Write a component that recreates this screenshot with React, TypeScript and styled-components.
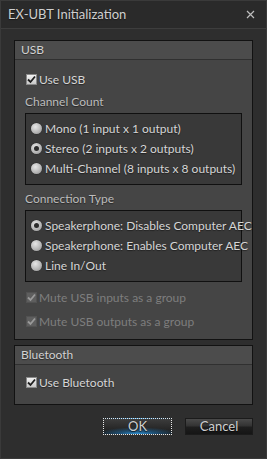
import { createGlobalStyle } from "styled-components";
import styled from "styled-components";

const GlobalStyle = createGlobalStyle`
  html, body {
    margin: 0;
    padding: 0;
    background: #2e2e2e;
  }
  * {
    box-sizing: border-box;
  }
`;

const Window = styled.div`
  width: 267px;
  height: 459px;
  background: #2e2e2e;
  border: 1px solid #3a3a3a;
  display: flex;
  flex-direction: column;
  font-family: Lato, "Open Sans", sans-serif;
  color: #d4d4d4;
  text-shadow: 0 1px 1px rgba(0, 0, 0, 0.45);
  white-space: nowrap;
`;

const TitleBar = styled.div`
  height: 28px;
  flex: none;
  display: flex;
  align-items: center;
  justify-content: space-between;
  padding: 0 10px 1px 7px;
  background: #2a2a2a;
  border-bottom: 1px solid #3d3d3d;
  font-size: 13px;
  color: #cfcfcf;
`;

const CloseButton = styled.button`
  width: 12px;
  height: 12px;
  padding: 0;
  border: none;
  background: none;
  display: flex;
  align-items: center;
  justify-content: center;
  margin-top: 1px;
`;

const Content = styled.div`
  padding: 11px 13px 0 13px;
  display: flex;
  flex-direction: column;
`;

const Group = styled.div<{ $gap?: number }>`
  border: 1px solid #121212;
  background: #454545;
  margin-top: ${({ $gap }) => $gap ?? 0}px;
`;

const GroupHeader = styled.div`
  height: 19px;
  display: flex;
  align-items: center;
  padding: 0 0 1px 6px;
  background: #4c4c4c;
  border-bottom: 1px solid #303030;
  font-size: 12px;
  color: #d2d2d2;
`;

const GroupBody = styled.div<{ $top: number; $bottom: number }>`
  padding: ${({ $top, $bottom }) => `${$top}px 10px ${$bottom}px 10px`};
  display: flex;
  flex-direction: column;
`;

const SectionLabel = styled.div<{ $gap: number }>`
  height: 20px;
  margin-top: ${({ $gap }) => $gap}px;
  display: flex;
  align-items: center;
  font-size: 12px;
  color: #bcbcbc;
`;

const OptionBox = styled.div`
  margin-top: 2px;
  border: 1px solid #101010;
  background: #393939;
  padding: 4px 0 6px 5px;
  display: flex;
  flex-direction: column;
`;

const Row = styled.label<{ $height?: number; $disabled?: boolean }>`
  height: ${({ $height }) => $height ?? 20}px;
  display: flex;
  align-items: center;
  font-size: 12px;
  color: ${({ $disabled }) => ($disabled ? "#7e7e7e" : "#d6d6d6")};
  text-shadow: ${({ $disabled }) => ($disabled ? "none" : "0 1px 1px rgba(0,0,0,0.45)")};
`;

const Radio = styled.span<{ $checked?: boolean }>`
  width: 11px;
  height: 11px;
  border-radius: 50%;
  margin-right: 3px;
  flex: none;
  background: radial-gradient(circle at 40% 35%, #e6e6e6 0%, #b8b8b8 55%, #8a8a8a 100%);
  box-shadow: 0 0 0 0.5px #2a2a2a;
  display: flex;
  align-items: center;
  justify-content: center;

  &::after {
    content: "";
    width: 5px;
    height: 5px;
    border-radius: 50%;
    background: #2c2c2c;
    display: ${({ $checked }) => ($checked ? "block" : "none")};
  }
`;

const CheckBox = styled.span<{ $disabled?: boolean }>`
  width: 11px;
  height: 11px;
  margin: 0 2px 0 1px;
  flex: none;
  background: ${({ $disabled }) => ($disabled ? "#5e5e5e" : "linear-gradient(#f2f2f2, #c9c9c9)")};
  border: 1px solid ${({ $disabled }) => ($disabled ? "#525252" : "#8a8a8a")};
  display: flex;
  align-items: center;
  justify-content: center;
`;

const ButtonRow = styled.div`
  margin-top: 13px;
  display: flex;
  justify-content: flex-end;
  gap: 13px;
`;

const DialogButton = styled.button<{ $primary?: boolean; $width: number }>`
  width: ${({ $width }) => $width}px;
  height: 17px;
  padding: 0 0 1px;
  font-family: Lato, "Open Sans", sans-serif;
  font-size: 13px;
  line-height: 14px;
  color: #d0d0d0;
  border: ${({ $primary }) => ($primary ? "1px dotted #e8e8e8" : "1px solid #1b1b1b")};
  background: ${({ $primary }) =>
    $primary
      ? "radial-gradient(ellipse 60% 45% at 50% 100%, #2f93d6 0%, rgba(30,110,170,0.6) 45%, rgba(0,0,0,0) 100%), linear-gradient(#3c3c3c, #1c1c1c)"
      : "linear-gradient(#4a4a4a 0%, #333 45%, #1e1e1e 55%, #151515 100%)"};
  text-shadow: 0 1px 1px rgba(0, 0, 0, 0.6);
`;

const Check = ({ disabled }: { disabled?: boolean }) => (
  <CheckBox $disabled={disabled}>
    <svg width="9" height="9" viewBox="0 0 9 9">
      <path d="M1 4.5 L3.5 7 L8 1.5" fill="none" stroke={disabled ? "#9a9a9a" : "#1e1e1e"} strokeWidth="1.8" />
    </svg>
  </CheckBox>
);

const channelOptions = [
  { label: "Mono (1 input x 1 output)", checked: false },
  { label: "Stereo (2 inputs x 2 outputs)", checked: true },
  { label: "Multi-Channel (8 inputs x 8 outputs)", checked: false },
];

const connectionOptions = [
  { label: "Speakerphone: Disables Computer AEC", checked: true },
  { label: "Speakerphone: Enables Computer AEC", checked: false },
  { label: "Line In/Out", checked: false },
];

const App = () => {
  return (
    <>
      <GlobalStyle />
      <Window>
        <TitleBar>
          <span>EX-UBT Initialization</span>
          <CloseButton>
            <svg width="9" height="9" viewBox="0 0 9 9">
              <path d="M1 1 L8 8 M8 1 L1 8" stroke="#bdbdbd" strokeWidth="1.2" />
            </svg>
          </CloseButton>
        </TitleBar>
        <Content>
          <Group>
            <GroupHeader>USB</GroupHeader>
            <GroupBody $top={9} $bottom={6}>
              <Row>
                <Check />
                Use USB
              </Row>
              <SectionLabel $gap={2}>Channel Count</SectionLabel>
              <OptionBox>
                {channelOptions.map((o) => (
                  <Row key={o.label}>
                    <Radio $checked={o.checked} />
                    {o.label}
                  </Row>
                ))}
              </OptionBox>
              <SectionLabel $gap={3}>Connection Type</SectionLabel>
              <OptionBox>
                {connectionOptions.map((o) => (
                  <Row key={o.label}>
                    <Radio $checked={o.checked} />
                    {o.label}
                  </Row>
                ))}
              </OptionBox>
              <Row $height={24} $disabled style={{ marginTop: 3 }}>
                <Check disabled />
                Mute USB inputs as a group
              </Row>
              <Row $height={24} $disabled>
                <Check disabled />
                Mute USB outputs as a group
              </Row>
            </GroupBody>
          </Group>
          <Group $gap={5}>
            <GroupHeader>Bluetooth</GroupHeader>
            <GroupBody $top={7} $bottom={12}>
              <Row>
                <Check />
                Use Bluetooth
              </Row>
            </GroupBody>
          </Group>
          <ButtonRow>
            <DialogButton $primary $width={69}>
              OK
            </DialogButton>
            <DialogButton $width={68}>Cancel</DialogButton>
          </ButtonRow>
        </Content>
      </Window>
    </>
  );
};

export default App;
